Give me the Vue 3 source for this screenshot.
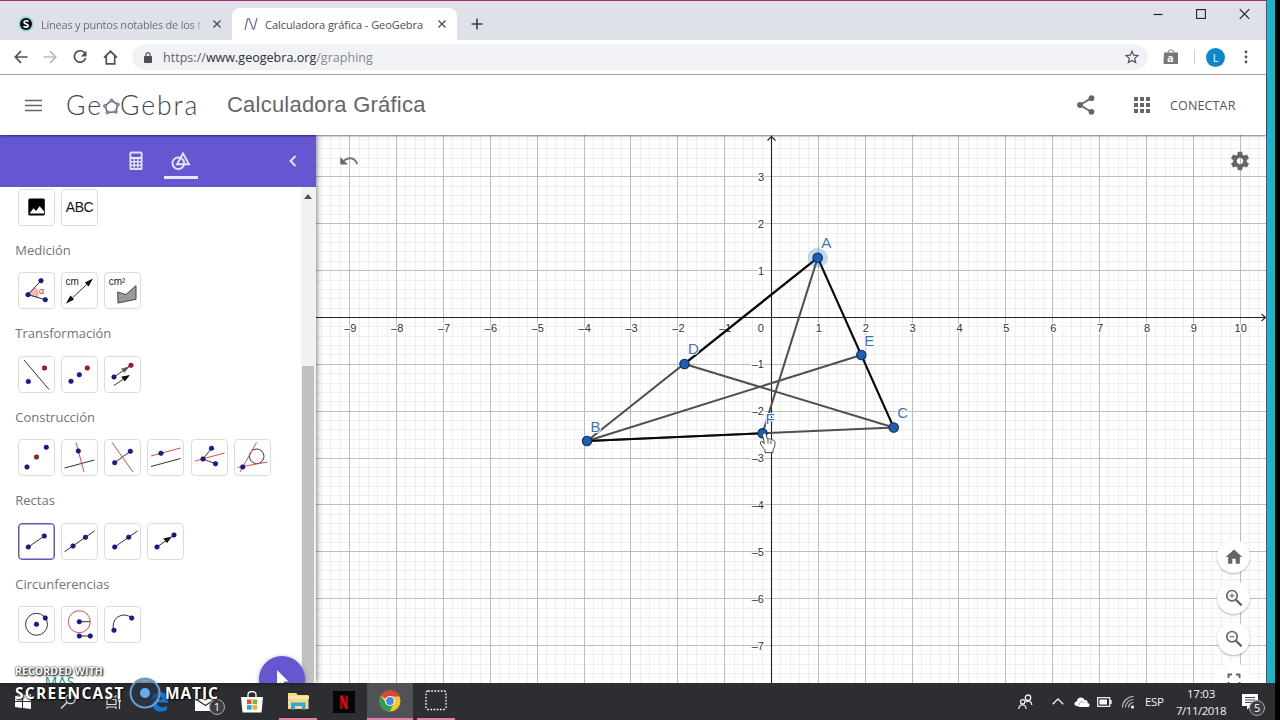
<template>
  <div class="screen">
    <div class="desktop">
      <div class="browser">
        <div class="tabs">
          <div class="tab tab-back">
            <svg class="fav" width="16" height="16" viewBox="0 0 16 16">
              <circle cx="8" cy="8" r="7.5" fill="#8fd0da"/>
              <circle cx="8" cy="8" r="6" fill="#0b1216"/>
              <path d="M10.3 5.8C9.7 4.4 6 4.4 6 6.3c0 2 4.200 1.200 4.200 3.300 0 2-3.900 2-4.600.4" fill="none" stroke="#fff" stroke-width="1.600"/>
            </svg>
            <span class="tab-title fade">Líneas y puntos notables de los t</span>
            <svg class="tab-close" width="10" height="10" viewBox="0 0 10 10"><path d="M1.500 1.500l7 7M8.500 1.500l-7 7" stroke="#4b4f55" stroke-width="1.400"/></svg>
          </div>
          <div class="tab tab-active">
            <svg class="fav" width="14" height="14" viewBox="0 0 14 14"><path d="M1 13L3.500 2h1.700L9 12h1L13 1" fill="none" stroke="#77759a" stroke-width="1.300"/></svg>
            <span class="tab-title active-title">Calculadora gráfica - GeoGebra</span>
            <svg class="tab-close" width="10" height="10" viewBox="0 0 10 10"><path d="M1.500 1.500l7 7M8.500 1.500l-7 7" stroke="#4b4f55" stroke-width="1.400"/></svg>
          </div>
          <svg class="new-tab" width="12" height="12" viewBox="0 0 12 12"><path d="M6 .5v11M.5 6h11" stroke="#3c4043" stroke-width="1.600"/></svg>
          <div class="win-buttons">
            <svg width="10" height="12" viewBox="0 0 10 12"><path d="M.5 6.500h9" stroke="#222" stroke-width="1.200"/></svg>
            <svg width="10" height="12" viewBox="0 0 10 12"><rect x=".6" y="1.600" width="8.800" height="8.800" fill="none" stroke="#222" stroke-width="1.100"/></svg>
            <svg width="11" height="12" viewBox="0 0 11 12"><path d="M.7 1.200l9.600 9.600M10.300 1.200L.7 10.800" stroke="#222" stroke-width="1.200"/></svg>
          </div>
        </div>

        <div class="toolbar">
          <div class="nav">
            <svg width="14" height="14" viewBox="0 0 14 14"><path d="M13.500 7H1.500M7 1.200L1.300 7 7 12.800" class="nav-line"/></svg>
            <svg width="14" height="14" viewBox="0 0 14 14"><path d="M.5 7h12M7 1.200L12.700 7 7 12.800" class="nav-line off"/></svg>
            <svg width="14" height="14" viewBox="0 0 14 14"><path d="M11.800 3.200A5.700 5.700 0 1 0 12.600 8" class="nav-line"/><path d="M13.500.8v5.700H7.800z" fill="#4d5156"/></svg>
            <svg width="15" height="15" viewBox="0 0 15 15"><path d="M1 7.600L7.500 1.300 14 7.600M3.300 6v7.800h8.400V6" class="nav-line"/></svg>
          </div>
          <div class="address">
            <svg width="8" height="11" viewBox="0 0 8 11"><rect y="4" width="8" height="7" rx=".8" fill="#4d5156"/><path d="M2 4.300V2.600a2 2 0 0 1 4 0v1.700" fill="none" stroke="#4d5156" stroke-width="1.200"/></svg>
            <span class="url"><i>https://</i>www.geogebra.org<em>/graphing</em></span>
            <svg class="star" width="14" height="14" viewBox="0 0 14 14"><path d="M7 1.300l1.700 3.900 4.200.4-3.200 2.800 1 4.200L7 10.400l-3.700 2.200 1-4.200L1.100 5.600l4.200-.4z" fill="none" stroke="#50545a" stroke-width="1.200"/></svg>
          </div>
          <div class="extensions">
            <span class="bag">
              <svg width="16" height="16" viewBox="0 0 16 16"><path d="M1 3.500h14V15H.500z" fill="#75777a"/><path d="M5 4a3 3 0 0 1 6 0" fill="none" stroke="#8a8c8f" stroke-width="1.100"/></svg>
              <b>a</b>
            </span>
            <span class="split"></span>
            <span class="avatar">L</span>
            <svg class="dots" width="4" height="14" viewBox="0 0 4 14"><circle v-for="y in [2, 7, 12]" :key="y" cx="2" :cy="y" r="1.400" fill="#50545a"/></svg>
          </div>
        </div>

        <header class="app-header">
          <svg class="burger" width="17" height="13" viewBox="0 0 17 13"><path d="M0 1.500h17M0 6.500h17M0 11.500h17" stroke="#666" stroke-width="1.500"/></svg>
          <div class="logo">
            <span class="ge">Ge</span>
            <svg width="17" height="17" viewBox="0 0 17 17">
              <path d="M8.500 2.500L14.800 6.500 12.800 13.800 4.500 14.500 2 8z" fill="none" stroke="#666" stroke-width="1.500"/>
              <circle v-for="p in pentagon" :key="p[0]" :cx="p[0]" :cy="p[1]" r="1.700" fill="#8e8bd8" stroke="#666" stroke-width=".5"/>
            </svg>
            <span class="gebra">Gebra</span>
          </div>
          <h1>Calculadora Gráfica</h1>
          <svg class="share" width="18" height="20" viewBox="0 0 18 20"><path d="M14.500 3L3 10l11.500 7" fill="none" stroke="#666" stroke-width="1.900"/><circle cx="14.500" cy="3.200" r="2.900" fill="#666"/><circle cx="3" cy="10" r="2.900" fill="#666"/><circle cx="14.500" cy="16.800" r="2.900" fill="#666"/></svg>
          <svg class="apps" width="16" height="16" viewBox="0 0 16 16">
            <rect v-for="n in 9" :key="n" :x="(n - 1) % 3 * 6" :y="Math.floor((n - 1) / 3) * 6" width="4" height="4" fill="#666"/>
          </svg>
          <span class="login">CONECTAR</span>
        </header>

        <main>
          <aside>
            <div class="side-head">
              <svg width="14" height="20" viewBox="0 0 14 20">
                <rect x=".5" y=".5" width="13" height="18.500" rx="1.500" fill="#e8e4fb"/>
                <rect x="2.300" y="2.500" width="9.400" height="3.400" fill="#6557d2"/>
                <rect v-for="n in 9" :key="n" :x="2.300 + (n - 1) % 3 * 3.600" :y="8 + Math.floor((n - 1) / 3) * 3.500" width="2.200" height="2.100" fill="#6557d2"/>
              </svg>
              <div class="side-tab">
                <svg width="20" height="20" viewBox="0 0 20 20"><circle cx="7.300" cy="12.300" r="5.800" fill="none" stroke="#e8e4fb" stroke-width="1.900"/><path d="M12 2.500L18 13.300H6z" fill="none" stroke="#e8e4fb" stroke-width="1.900"/></svg>
              </div>
              <svg class="collapse" width="8" height="12" viewBox="0 0 8 12"><path d="M6.500 1L1.500 6l5 5" fill="none" stroke="#e8e4fb" stroke-width="1.900"/></svg>
            </div>
            <div class="side-body">
              <div class="tools">
                <div class="row">
                  <div class="tool"><svg viewBox="0 0 37 37"><rect x="10.300" y="9.500" width="16.500" height="17" rx="1.500" fill="#000"/><path d="M11.500 24.500l4-5.300 2.500 2.800 3.600-4.700 4.400 5v2.200z" fill="#fff"/></svg></div>
                  <div class="tool abc">ABC</div>
                </div>
                <template v-for="group in groups" :key="group.title">
                  <h2>{{ group.title }}</h2>
                  <div class="row">
                    <div v-for="(tool, i) in group.tools" :key="i" class="tool" :class="{ selected: tool.selected }">
                      <svg viewBox="0 0 37 37">
                        <path v-for="(d, k) in tool.fills || []" :key="'f' + k" :d="d[0]" :fill="d[1]" :stroke="d[2] || 'none'"/>
                        <path v-for="(d, k) in tool.black || []" :key="'b' + k" :d="d" class="ink"/>
                        <path v-for="(d, k) in tool.red || []" :key="'r' + k" :d="d" class="ink red"/>
                        <circle v-for="(p, k) in tool.dots || []" :key="'p' + k" :cx="p[0]" :cy="p[1]" r="2.300" :class="p[2] ? 'dot-red' : 'dot-blue'"/>
                        <text v-if="tool.text" :x="tool.tx" :y="tool.ty" :class="tool.cls">{{ tool.text }}</text>
                      </svg>
                    </div>
                  </div>
                </template>
                <div class="more">MÁS</div>
              </div>
              <div class="scrollbar">
                <svg width="8" height="5" viewBox="0 0 8 5"><path d="M0 5l4-5 4 5z" fill="#505050"/></svg>
                <div class="thumb"></div>
              </div>
              <div class="fab"><svg width="14" height="20" viewBox="0 0 14 20"><path d="M1 0v16l3.700-3.500L7.500 19l2.700-1.100L7.500 11.500h5z" fill="#fff"/></svg></div>
            </div>
          </aside>

          <section class="graph">
            <svg class="canvas" width="950" height="548" viewBox="316 135 950 548">
              <path :d="minor" class="minor"/>
              <path :d="major" class="major"/>
              <path d="M316 317.500H1265M771.500 683V137" class="axis"/>
              <path d="M1261.500 314l4 3.500-4 3.500M767.500 140.500l4-4 4 4" class="axis"/>
              <g class="labels">
                <text v-for="n in xs" :key="'x' + n" :x="ox + n * unit + (n < 0 ? .7 : .5)" y="331.700" text-anchor="middle">{{ label(n) }}</text>
                <text x="760.700" y="331.700" text-anchor="middle">0</text>
                <text v-for="n in ys" :key="'y' + n" x="764" :y="oy - n * unit + 4" text-anchor="end">{{ label(n) }}</text>
              </g>
              <path d="M817.700 257.700L587 441M587 441L861.300 355M684.500 364L893.700 427.500M817.700 257.700L762.500 433.300M587 441L893.700 427.500" class="seg"/>
              <path d="M817.700 257.700L684.500 364M817.700 257.700L893.700 427.500M587 441L762.500 433.300" class="seg strong"/>
              <circle cx="817.700" cy="257.700" r="10" fill="#1565c0" opacity=".25"/>
              <g v-for="p in points" :key="p.name">
                <circle :cx="p.x" :cy="p.y" r="4.700" class="point"/>
                <text :x="p.lx" :y="p.ly" class="point-label">{{ p.name }}</text>
              </g>
              <path d="M763.500 433.500c1.200-.8 2.500.1 2.800 1.300l1 4.200 1.500-.2c1-.3 1.700.2 2 .7.900-.3 1.700 0 2.100.8 1-.1 1.700.4 1.900 1.500.5 3.500-.2 5.700-1.800 7.800v3h-8v-2.700c-2-1.800-3.500-4.400-4.700-6.900-.5-1.600 1.500-2.300 2.600-.9l1.500 1.700-1.800-8.600c-.1-.8.300-1.500.9-1.700z" fill="#fff" stroke="#333" stroke-width=".9"/>
              <path d="M768 439.500v4M771 440.500v3.500" stroke="#333" stroke-width=".9"/>
            </svg>
            <svg class="undo" width="20" height="10" viewBox="0 0 20 10"><path d="M1.300 1v7.500h7.500z" fill="#666"/><path d="M4.500 5.500C8 1 15.500.5 18.200 8.200" fill="none" stroke="#777" stroke-width="2"/></svg>
            <svg class="gear" width="22" height="22" viewBox="0 0 24 24"><path d="M19.430 12.980c.04-.32.070-.64.070-.98s-.03-.66-.07-.98l2.110-1.650c.19-.15.24-.42.12-.64l-2-3.460c-.12-.22-.39-.3-.61-.22l-2.490 1c-.52-.4-1.080-.73-1.690-.98l-.38-2.650C14.460 2.180 14.250 2 14 2h-4c-.25 0-.46.18-.49.42l-.38 2.650c-.61.25-1.170.59-1.690.98l-2.490-1c-.23-.09-.49 0-.61.22l-2 3.460c-.13.22-.07.490.12.640l2.110 1.650c-.04.320-.07.650-.07.980s.03.660.070.980l-2.110 1.650c-.19.150-.24.420-.12.640l2 3.460c.12.220.39.300.61.220l2.490-1c.52.400 1.080.730 1.690.980l.38 2.650c.03.240.24.420.49.420h4c.25 0 .46-.18.490-.42l.38-2.650c.61-.25 1.170-.59 1.690-.98l2.490 1c.23.090.49 0 .61-.22l2-3.460c.12-.22.070-.49-.12-.64l-2.110-1.650zM12 15.500c-1.930 0-3.500-1.570-3.500-3.500s1.570-3.500 3.500-3.500 3.500 1.570 3.500 3.500-1.570 3.500-3.500 3.500z" fill="#666"/></svg>
            <div class="zoomers">
              <div class="round"><svg width="20" height="20" viewBox="0 0 24 24"><path d="M10 20v-6h4v6h5v-8h3L12 3 2 12h3v8z" fill="#666"/></svg></div>
              <div class="round"><svg width="18" height="18" viewBox="0 0 18 18"><circle cx="7" cy="6.700" r="5.200" class="lens"/><path d="M10.800 10.600l5.800 5.800" class="lens thick"/><path d="M7 4.200v5M4.500 6.700h5" class="lens thin"/></svg></div>
              <div class="round"><svg width="18" height="18" viewBox="0 0 18 18"><circle cx="7" cy="6.700" r="5.200" class="lens"/><path d="M10.800 10.600l5.800 5.800" class="lens thick"/><path d="M4.500 6.700h5" class="lens thin"/></svg></div>
              <div class="round plain"><svg width="14" height="14" viewBox="0 0 14 14"><path d="M1.500 5V1.500H5M9 1.500h3.500V5M1.500 9v3.500H5M9 12.500h3.500V9" fill="none" stroke="#666" stroke-width="2"/></svg></div>
            </div>
          </section>
        </main>
      </div>
      <div class="wallpaper"></div>
    </div>

    <footer>
      <div class="task first"><svg width="16" height="15" viewBox="0 0 16 15"><path d="M0 2l7-1v6H0zM8 .9L16 0v7H8zM0 8h7v6l-7-1zM8 8h8v7l-8-1z" fill="#fff"/></svg></div>
      <div class="task"><svg width="17" height="17" viewBox="0 0 17 17"><circle cx="10.500" cy="6" r="4.700" fill="none" stroke="#ddd" stroke-width="1.300"/><path d="M7 9.500L1 15.500" stroke="#ddd" stroke-width="1.400"/></svg></div>
      <div class="task"><svg width="16" height="16" viewBox="0 0 16 16"><path d="M1 1v2h9V1M1 15v-2h9v2M1 5.500h9v5H1zM13.500 1v14" fill="none" stroke="#ddd" stroke-width="1.200"/><path d="M12 5h3v2.500h-3z" fill="#fff"/></svg></div>
      <div class="task"><svg width="18" height="20" viewBox="0 0 18 20"><path d="M0 9C1 3 5 0 9.500 0 14 0 17 3.500 17 8.500v2H6c.3 5 6 5.500 10 3.500v4C8 21.500 1 18.500 1.500 11.500 2 8.500 4 6.500 6.500 5.500 3.500 5.500 1.500 7 0 9zm6-1.500h5.500C11.500 4 6.500 4 6 7.500z" fill="#1276cf"/></svg></div>
      <div class="task mail"><svg width="22" height="18" viewBox="0 0 22 18"><path d="M0 6h21v12H0z" fill="#fff"/><path d="M0 5.500l10.500 7L21 5.500" fill="none" stroke="#34363a" stroke-width="1.300"/></svg><span class="count">1</span></div>
      <div class="task"><svg width="22" height="22" viewBox="0 0 22 22"><path d="M0 6h22l-1.500 15.500h-19z" fill="#fff"/><path d="M7 6V3.500a4 3 0 0 1 8 0V6" fill="none" stroke="#fff" stroke-width="1.300"/><path d="M6 8.500h4.600v4.600H6z" fill="#e2512b"/><path d="M11.600 8.500h4.600v4.600h-4.600z" fill="#7cb728"/><path d="M6 14.100h4.600v4.600H6z" fill="#29a3e2"/><path d="M11.600 14.100h4.600v4.600h-4.600z" fill="#f6b41c"/></svg></div>
      <div class="task open"><svg width="21" height="18" viewBox="0 0 21 18"><path d="M0 1h8l2 2h10.500v14H0z" fill="#f6d985"/><path d="M0 4h21v3H0z" fill="#fbe7ab"/><path d="M3 17.500V10.500h14.500v7H14v-3.500H7v3.500z" fill="#36a5d8"/></svg></div>
      <div class="task"><svg width="22" height="22" viewBox="0 0 22 22"><path d="M0 0h22v22H0z" fill="#050505"/><path d="M8.400 18V4.500M13.600 18V4.500" stroke="#a90d15" stroke-width="2.400"/><path d="M8.300 4.500l5.400 13.500" stroke="#e50914" stroke-width="2.400"/></svg></div>
      <div class="task open current"><svg width="22" height="22" viewBox="0 0 22 22"><circle cx="11" cy="11" r="10.500" fill="#f3c724"/><path d="M11 11L1.900 5.750A10.500 10.500 0 0 1 20.500 6.500H11z" fill="#df4536"/><path d="M1.900 5.750A10.500 10.500 0 0 0 10.500 21.500L15 13.500 11 11 7 13.500z" fill="#2f9e54"/><circle cx="11" cy="11" r="5" fill="#fff"/><circle cx="11" cy="11" r="3.900" fill="#4688e8"/></svg></div>
      <div class="task open"><svg width="22" height="22" viewBox="0 0 22 22"><rect x="1" y="1" width="20" height="18.500" rx="2" fill="none" stroke="#f0f0f0" stroke-width="1.300" stroke-dasharray="1.800 1.400"/></svg></div>
      <div class="tray">
        <svg width="15" height="16" viewBox="0 0 15 16"><circle cx="10" cy="3.700" r="2.700" class="tray-line"/><circle cx="4.700" cy="7.800" r="2.200" class="tray-line"/><path d="M.9 15c0-5.500 7.200-5.500 7.200 0M7.800 8c3-2.200 6-.5 6 3" class="tray-line"/></svg>
        <svg class="caret" width="12" height="7" viewBox="0 0 12 7"><path d="M.7 6.300L6 1l5.300 5.300" class="tray-line"/></svg>
        <svg class="cloud" width="16" height="12" viewBox="0 0 16 12"><path d="M3 10C-.8 9.500 0 5.500 2.800 5.600 3 1 9 .2 10.500 4c3-.5 3.300 2 3 3 3 .3 2.500 4-.3 4H6z" fill="#fff"/><path d="M5 9c0-3 3-4 5-2.500" fill="none" stroke="#888" stroke-width=".8"/></svg>
        <svg class="battery" width="15" height="10" viewBox="0 0 15 10"><path d="M.7.700h12v8.600H.7zM14 3v4" class="tray-line"/><path d="M2.500 2.500h7.500v5H2.500z" fill="#fff"/></svg>
        <svg class="wifi" width="14" height="14" viewBox="0 0 14 14"><path d="M1.500 12.500A11 11 0 0 1 12.500 1.500M4.500 12.500a8 8 0 0 1 8-8M7.500 12.500a5 5 0 0 1 5-5" fill="none" stroke="#bbb" stroke-width="1.200"/><circle cx="11.500" cy="12" r="1.600" fill="#fff"/></svg>
        <span class="lang">ESP</span>
        <div class="clock"><span>17:03</span><span>7/11/2018</span></div>
        <div class="notes">
          <svg width="17" height="16" viewBox="0 0 17 16"><path d="M0 0h16v12H9l-4 3.500V12H0z" fill="#fff"/><path d="M3 3.500h10M3 6h10M3 8.500h7" stroke="#444" stroke-width="1"/></svg>
          <span class="count">5</span>
        </div>
      </div>
    </footer>

    <div class="watermark">
      <div class="wm-top">RECORDED WITH</div>
      <div class="wm-bottom">
        <span class="wm-a">SCREENCAST</span>
        <svg width="32" height="32" viewBox="0 0 32 32"><circle cx="16" cy="16" r="14.500" fill="#26384d" fill-opacity=".6" stroke="#6f9fcb" stroke-width="2"/><circle cx="16" cy="16" r="5" fill="#68abe8"/><path d="M12.500 3.800h7" stroke="#aaa" stroke-width="1"/></svg>
        <span class="wm-b">MATIC</span>
      </div>
    </div>
  </div>
</template>

<script setup>
const ox = 771.5
const oy = 317.5
const unit = 46.87

const xs = [-9, -8, -7, -6, -5, -4, -3, -2, -1, 1, 2, 3, 4, 5, 6, 7, 8, 9, 10]
const ys = [3, 2, 1, -1, -2, -3, -4, -5, -6, -7]
const label = (n) => (n < 0 ? '–' + -n : '' + n)

// one path for every grid line of the given spacing
const grid = (step) => {
  let d = ''
  for (let i = -60; i <= 60; i++) {
    const x = Math.round(ox + i * step - 0.5) + 0.5
    const y = Math.round(oy + i * step - 0.5) + 0.5
    if (x > 316 && x < 1266) d += `M${x} 135V683`
    if (y > 135 && y < 683) d += `M316 ${y}H1266`
  }
  return d
}
const minor = grid(unit / 5)
const major = grid(unit)

const points = [
  { name: 'A', x: 817.7, y: 257.7, lx: 821.3, ly: 248.3 },
  { name: 'B', x: 587, y: 441, lx: 590.5, ly: 432 },
  { name: 'C', x: 893.7, y: 427.5, lx: 897.2, ly: 418 },
  { name: 'D', x: 684.5, y: 364, lx: 688, ly: 354 },
  { name: 'E', x: 861.3, y: 355, lx: 864.3, ly: 346 },
  { name: 'F', x: 762.5, y: 433.3, lx: 765.5, ly: 423.5 }
]

const pentagon = [[8.5, 2.5], [14.8, 6.5], [12.8, 13.8], [4.5, 14.5], [2, 8]]

const groups = [
  {
    title: 'Medición',
    tools: [
      { fills: [['M10 22.700L16.500 15.500A9.500 9.500 0 0 1 19.500 25.300z', '#f9b9b9', '#e88']], black: ['M23 8.700L10 22.700 27.300 27.700'], dots: [[10, 22.7], [23, 8.7], [27.3, 27.7]], text: 'α', tx: 21, ty: 21.5, cls: 'alpha' },
      { fills: [['M32 6.500l-4.500 8-3.500-4zM5 31.500l4.500-8 3.500 4z', '#000']], black: ['M8 29L29 9.500'], text: 'cm', tx: 4.5, ty: 12.5, cls: 'unit' },
      { fills: [['M13.700 20L22 22.500 32 13.700V27.300L14 31z', '#999', '#444']], text: 'cm²', tx: 4.7, ty: 12.5, cls: 'unit' }
    ]
  },
  {
    title: 'Transformación',
    tools: [
      { black: ['M6 4L31 33.500'], dots: [[26.5, 12, 1], [10.3, 25.5]] },
      { dots: [[10, 25.3], [18.3, 18.7], [26.3, 12, 1]] },
      { fills: [['M25.500 10.500l-5 6.500-3.700-4.500z', '#777'], ['M26 19l-5.300 6.500-3.500-4.700z', '#000']], black: ['M10 21L26 10M10 29.500L21 22'], dots: [[10, 21], [27, 9.3, 1]] }
    ]
  },
  {
    title: 'Construcción',
    tools: [
      { dots: [[28.3, 8.3], [18.5, 18, 1], [9, 28]] },
      { black: ['M3.500 29L33.500 21'], red: ['M15 3.500L23 33'], dots: [[17.3, 12]] },
      { black: ['M10.700 23.700L26.300 12.300'], red: ['M8 3.500L29 33'], dots: [[10.7, 23.7], [26.3, 12.3]] },
      { black: ['M4 27.500L33.500 19.500'], red: ['M4 17L33.500 9'], dots: [[14, 14.3]] },
      { black: ['M20.500 9.300L12 20 24.500 24.700'], red: ['M4 22L33.500 14'], dots: [[20.5, 9.3], [12, 20], [24.5, 24.7]] },
      { black: ['M30 17.300a7.300 7.300 0 1 1-14.600 0a7.300 7.300 0 1 1 14.600 0'], red: ['M6 33L22.500 3.500M3.500 28.500L33.500 23'], dots: [[8.7, 28]] }
    ]
  },
  {
    title: 'Rectas',
    tools: [
      { selected: true, black: ['M10.300 24L26.300 13'], dots: [[10.3, 24], [26.3, 13]] },
      { black: ['M3.500 28.700L33.500 8'], dots: [[12, 23], [24.5, 14.3]] },
      { black: ['M10.700 24L33.500 8'], dots: [[10.7, 24], [24.7, 14.2]] },
      { fills: [['M25 13.500l-5 6.500-3.700-4.500z', '#000']], black: ['M10 24L27 12'], dots: [[10, 24], [27, 12]] }
    ]
  },
  {
    title: 'Circunferencias',
    tools: [
      { black: ['M29.500 18.300a11 11 0 1 1-22 0a11 11 0 1 1 22 0'], dots: [[18.5, 18.3], [27.3, 12]] },
      { black: ['M18.300 15.700H29.300M18.300 30H29.300'], red: ['M29.300 15.700a11 11 0 1 1-22 0a11 11 0 1 1 22 0'], dots: [[18.3, 15.7], [18.3, 30], [29.3, 30]] },
      { black: ['M10 24.300A11 11 0 0 1 27.700 12'], dots: [[10, 24.3], [27.7, 12]] }
    ]
  }
]
</script>

<style>
body{
  background:#000;
}
</style>
<style scoped>
.screen{
  position:relative;
  display:flex;
  flex-direction:column;
  width:1280px;
  height:720px;
  overflow:hidden;
  background:#000;
  font-family:"Open Sans","Noto Sans",sans-serif;
}
svg{
  display:block;
  flex:none;
}
.desktop{
  display:flex;
  height:683px;
}
.browser{
  display:flex;
  flex-direction:column;
  width:1266px;
  border-right:1px solid #7c3f78;
  background:#fff;
}
.wallpaper{
  width:8px;
  background:#17b6c8;
}
.tabs{
  display:flex;
  align-items:flex-end;
  height:40px;
  box-sizing:border-box;
  border-top:1px solid #9b2f66;
  background:#dee1e8;
}
.tab{
  display:flex;
  align-items:center;
  height:32px;
  box-sizing:border-box;
  font-size:11.5px;
  white-space:nowrap;
}
.tab-back{
  width:232px;
  padding-left:18px;
  color:#6a6f78;
}
.tab-active{
  width:225px;
  padding-left:12px;
  border-radius:8px 8px 0 0;
  background:#fff;
  color:#4a4e55;
}
.tab-title{
  width:163px;
  margin-left:7px;
}
.tab-back .tab-title{
  font-size:11px;
  letter-spacing:-.22px;
}
.active-title{
  width:158px;
  font-size:11px;
  letter-spacing:-.05px;
}
.fade{
  -webkit-mask-image:linear-gradient(to right,#000 150px,transparent 166px);
  mask-image:linear-gradient(to right,#000 150px,transparent 166px);
}
.tab-close{
  margin-left:8px;
}
.tab-active .tab-close{
  margin-left:14px;
}
.new-tab{
  margin:0 0 10px 14px;
}
.win-buttons{
  display:flex;
  gap:33px;
  margin:0 16px 20px auto;
}
.toolbar{
  display:flex;
  align-items:center;
  height:35px;
  box-sizing:border-box;
  border-bottom:1px solid #a9a9ab;
}
.nav{
  display:flex;
  gap:15.7px;
  width:132px;
  box-sizing:border-box;
  padding-left:13.5px;
}
.nav-line{
  fill:none;
  stroke:#4d5156;
  stroke-width:1.7;
}
.nav-line.off{
  stroke:#b9bbbf;
}
.address{
  display:flex;
  align-items:center;
  width:1016px;
  height:26px;
  box-sizing:border-box;
  padding:0 9px 0 12px;
  border-radius:13px;
  background:#f0f2f5;
}
.url{
  margin-left:11px;
  font-size:12.5px;
  letter-spacing:.03px;
  color:#2d3035;
}
.url i,.url em{
  font-style:normal;
  color:#5f6368;
}
.url em{
  color:#85898f;
}
.star{
  margin-left:auto;
}
.extensions{
  display:flex;
  align-items:center;
}
.bag{
  position:relative;
  margin-left:15px;
}
.bag b{
  position:absolute;
  left:4px;
  top:0;
  font-size:11px;
  line-height:17px;
  color:#fff;
}
.split{
  width:1px;
  height:14px;
  margin:0 11px 0 15px;
  background:#c9cbcf;
}
.avatar{
  width:19px;
  height:19px;
  border-radius:50%;
  background:#0d86cf;
  color:#fff;
  font-size:11px;
  line-height:19px;
  text-align:center;
}
.dots{
  margin-left:19px;
}
.app-header{
  position:relative;
  z-index:2;
  display:flex;
  align-items:center;
  height:60px;
  box-shadow:0 1px 2px rgba(0,0,0,.55);
  background:#fff;
}
.burger{
  margin-left:25px;
}
.logo{
  display:flex;
  align-items:center;
  width:132px;
  margin-left:24px;
  font-family:Lato,"Open Sans",sans-serif;
  font-size:26.5px;
  font-weight:300;
  color:#444;
}
.ge{
  width:37px;
  letter-spacing:2px;
}
.gebra{
  letter-spacing:1.900px;
}
.logo svg{
  margin:3px 0 0;
}
.app-header h1{
  margin:0 0 0 29px;
  font:400 22px/30px "Liberation Sans",Arial,sans-serif;
  letter-spacing:.22px;
  color:#666;
}
.share{
  margin-left:auto;
}
.apps{
  margin:0 20px 0 39px;
}
.login{
  width:67px;
  margin-right:29px;
  font-size:12.5px;
  letter-spacing:.15px;
  color:#555;
}
main{
  display:flex;
  height:548px;
}
aside{
  position:relative;
  z-index:1;
  width:316px;
  box-shadow:1px 0 5px rgba(0,0,0,.5);
  background:#fff;
}
.side-head{
  display:flex;
  align-items:center;
  height:52px;
  padding-left:129px;
  background:#6557d2;
}
.side-tab{
  display:flex;
  justify-content:center;
  width:34px;
  height:36px;
  box-sizing:border-box;
  margin-left:21px;
  padding:8px 0 0;
  border-bottom:3px solid #e8e4fb;
}
.collapse{
  margin-left:91px;
}
.side-body{
  position:relative;
  display:flex;
  height:496px;
  overflow:hidden;
}
.tools{
  width:301px;
  padding:2px 0 0 17.8px;
  box-sizing:border-box;
}
.row{
  display:flex;
  gap:6.2px;
}
.tool{
  width:37px;
  height:37px;
  box-sizing:border-box;
  border:1px solid #dcdcdf;
  border-radius:4px;
}
.tool svg{
  width:37px;
  height:37px;
  margin:-1px;
}
.tool.selected{
  border-color:#6557b8;
  box-shadow:inset 0 0 0 .5px #6557b8;
}
.abc{
  font:14px/35px "Liberation Sans",Arial,sans-serif;
  letter-spacing:-.5px;
  text-align:center;
  color:#111;
}
.tools h2{
  height:46.4px;
  margin:0 0 0 -2.5px;
  font-size:13px;
  font-weight:400;
  line-height:48px;
  color:#737373;
}
.ink{
  fill:none;
  stroke:#333;
  stroke-width:1;
}
.ink.red{
  stroke:#dd4a58;
}
.dot-blue{
  fill:#1a1a98;
  stroke:#00004c;
  stroke-width:.5;
}
.dot-red{
  fill:#a81838;
  stroke:#400;
  stroke-width:.5;
}
.unit{
  font:10px "Liberation Sans",Arial,sans-serif;
  fill:#222;
}
.alpha{
  font:9px "Liberation Sans",Arial,sans-serif;
  fill:#d22;
}
.more{
  margin:29px 0 0 27px;
  font-size:14px;
  line-height:20px;
  letter-spacing:.3px;
  color:#12907a;
}
.scrollbar{
  display:flex;
  flex-direction:column;
  align-items:center;
  width:15px;
  box-sizing:border-box;
  padding:7px 1px 0 0;
  background:#f1f1f1;
}
.thumb{
  width:12px;
  flex:1;
  margin-top:167px;
  background:#c1c1c1;
}
.fab{
  position:absolute;
  left:259px;
  top:469px;
  width:46px;
  height:46px;
  border-radius:50%;
  background:#6557d2;
  box-shadow:0 1px 4px rgba(0,0,0,.4);
}
.fab svg{
  margin:14px 0 0 17px;
}
.graph{
  position:relative;
  width:950px;
}
.minor{
  stroke:#efefef;
  stroke-width:1;
}
.major{
  stroke:#bdbdbd;
  stroke-width:1;
}
.axis{
  fill:none;
  stroke:#222;
  stroke-width:1.1;
}
.labels{
  font:11px "Liberation Sans",Arial,sans-serif;
  fill:#333;
  stroke:#fff;
  stroke-width:2.5px;
  paint-order:stroke;
}
.seg{
  stroke:#505050;
  stroke-width:2.1;
}
.seg.strong{
  stroke:#080808;
}
.point{
  fill:#1c5fb4;
  stroke:#0a2a52;
  stroke-width:1.1;
}
.point-label{
  font:15px "Liberation Sans",Arial,sans-serif;
  fill:#3675bb;
  stroke:#fff;
  stroke-width:2px;
  paint-order:stroke;
}
.undo{
  position:absolute;
  left:23px;
  top:21px;
}
.gear{
  position:absolute;
  left:913px;
  top:15px;
}
.zoomers{
  position:absolute;
  left:899px;
  top:403px;
  display:flex;
  flex-direction:column;
  gap:8px;
  height:143px;
  padding:2px 2px 0;
  overflow:hidden;
}
.round{
  display:flex;
  flex:none;
  align-items:center;
  justify-content:center;
  width:33px;
  height:33px;
  border-radius:50%;
  background:#fff;
  box-shadow:0 1px 2px rgba(0,0,0,.3);
}
.round.plain{
  box-shadow:none;
}
.lens{
  fill:none;
  stroke:#666;
  stroke-width:1.7;
}
.lens.thick{
  stroke-width:2.2;
}
.lens.thin{
  stroke-width:1.1;
}
footer{
  display:flex;
  width:1275px;
  height:37px;
  background:#2d2e32;
}
.task{
  position:relative;
  display:flex;
  align-items:center;
  justify-content:center;
  width:46px;
  box-sizing:border-box;
}
.task.first{
  width:45px;
}
.task.open{
  border-bottom:2px solid #e57fa8;
  margin:0 4px;
  width:38px;
}
.task.current{
  width:46px;
  margin:0;
  background:#505257;
}
.count{
  position:absolute;
  width:14px;
  height:14px;
  border:1px solid #aaa;
  border-radius:50%;
  background:#3c3e42;
  color:#fff;
  font-size:11px;
  line-height:14px;
  text-align:center;
}
.mail .count{
  left:26px;
  top:16px;
}
.tray{
  display:flex;
  align-items:center;
  margin-left:auto;
  color:#f2f2f2;
  font-size:11.5px;
  letter-spacing:-.3px;
}
.tray-line{
  fill:none;
  stroke:#eee;
  stroke-width:1.3;
}
.caret{
  margin-left:19px;
}
.cloud{
  margin-left:10px;
}
.battery{
  margin-left:7px;
}
.wifi{
  margin-left:9px;
}
.lang{
  width:19px;
  margin-left:10px;
}
.clock{
  display:flex;
  flex-direction:column;
  align-items:center;
  width:52px;
  margin-left:11px;
  line-height:17px;
  white-space:nowrap;
}
.clock span:last-child{
  letter-spacing:-.5px;
}
.notes{
  position:relative;
  margin:0 16px 0 15px;
}
.notes .count{
  left:7px;
  top:6px;
}
.watermark{
  position:absolute;
  z-index:5;
  left:15px;
  top:665px;
  color:#fff;
  font-family:"Open Sans","Noto Sans",sans-serif;
  font-weight:700;
  text-shadow:0 0 2px #000,1px 1px 2px #000;
}
.wm-top{
  height:12px;
  font-size:10.5px;
  line-height:13px;
  letter-spacing:.1px;
}
.wm-bottom{
  display:flex;
  align-items:center;
  font-size:15.5px;
}
.wm-a{
  width:114px;
  letter-spacing:1.3px;
}
.wm-b{
  margin-left:4px;
  letter-spacing:.9px;
}
</style>
